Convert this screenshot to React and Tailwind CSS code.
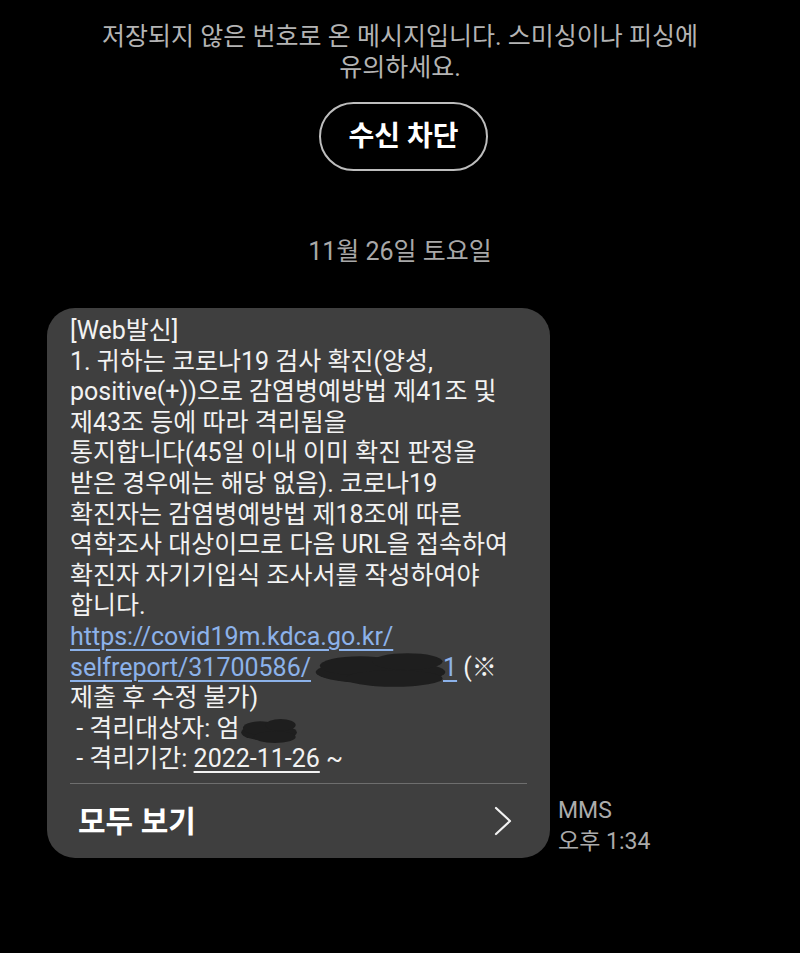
import React from 'react';

const font = "font-['Roboto','Noto_Sans_CJK_KR',sans-serif]";

const lines = [
  '[Web발신]',
  '1. 귀하는 코로나19 검사 확진(양성,',
  'positive(+))으로 감염병예방법 제41조 및',
  '제43조 등에 따라 격리됨을',
  '통지합니다(45일 이내 이미 확진 판정을',
  '받은 경우에는 해당 없음). 코로나19',
  '확진자는 감염병예방법 제18조에 따른',
  '역학조사 대상이므로 다음 URL을 접속하여',
  '확진자 자기기입식 조사서를 작성하여야',
  '합니다.',
];

function Scribble({ className }) {
  return (
    <svg viewBox="0 0 100 40" preserveAspectRatio="none" className={className}>
      <g fill="#1e1e1e">
        <ellipse cx="50" cy="22" rx="48" ry="11" />
        <ellipse cx="35" cy="16" rx="30" ry="9" />
        <ellipse cx="70" cy="12" rx="26" ry="8" />
        <ellipse cx="60" cy="28" rx="36" ry="8" />
      </g>
    </svg>
  );
}

export default function App() {
  return (
    <div className={`min-h-[953px] w-[800px] bg-black ${font} flex flex-col items-center`}>
      <p className="mt-[21px] text-center text-[25px] leading-[31px] text-[#b4b4b4]">
        저장되지 않은 번호로 온 메시지입니다. 스미싱이나 피싱에
        <br />
        유의하세요.
      </p>

      <button className="ml-[7px] mt-[19px] h-[69px] w-[169px] rounded-full border-2 border-[#bdbdbd] text-[28px] font-bold text-white">
        수신 차단
      </button>

      <p className="mt-[66px] text-[25px] leading-[30px] text-[#a8a8a8]">11월 26일 토요일</p>

      <div className="mt-[41px] flex w-full items-end pl-[47px]">
        <div className="w-[503px] rounded-[28px] bg-[#3f3f3f]">
          <div className="pl-[23px] pr-[20px] pt-[8px] text-[25px] leading-[30.6px] text-[#f2f2f2] whitespace-nowrap">
            {lines.map((l) => (
              <div key={l}>{l}</div>
            ))}
            <div>
              <span className="text-[#8cb2ea] underline underline-offset-[4px] decoration-[1.5px]">https://covid19m.kdca.go.kr/</span>
            </div>
            <div>
              <span className="relative text-[#8cb2ea] underline underline-offset-[4px] decoration-[1.5px]">
                selfreport/31700586/
                <span className="inline-block w-[132px]" />
                1
                <Scribble className="absolute left-[243px] top-[-4px] h-[42px] w-[135px]" />
              </span>
              <span> (※</span>
            </div>
            <div>제출 후 수정 불가)</div>
            <div className="relative">
              &nbsp;- 격리대상자: 엄
              <Scribble className="absolute left-[170px] top-[2px] h-[30px] w-[58px]" />
            </div>
            <div>
              &nbsp;- 격리기간: <span className="underline underline-offset-[4px] decoration-[1.5px]">2022-11-26</span> ~
            </div>
          </div>
          <div className="mx-[23px] mt-[8px] h-[1.5px] bg-[#6e6e6e]" />
          <div className="flex h-[74px] items-center justify-between pl-[31px] pr-[38px]">
            <span className="text-[30px] font-bold text-white">모두 보기</span>
            <svg width="18" height="30" viewBox="0 0 18 30" fill="none" stroke="#f2f2f2" strokeWidth="2.2" strokeLinecap="round" strokeLinejoin="round">
              <path d="M2 2 L16 15 L2 28" />
            </svg>
          </div>
        </div>
        <div className="ml-[8px] pb-[1px] text-[23px] leading-[31px] text-[#ababab]">
          <div>MMS</div>
          <div>오후 1:34</div>
        </div>
      </div>
    </div>
  );
}
